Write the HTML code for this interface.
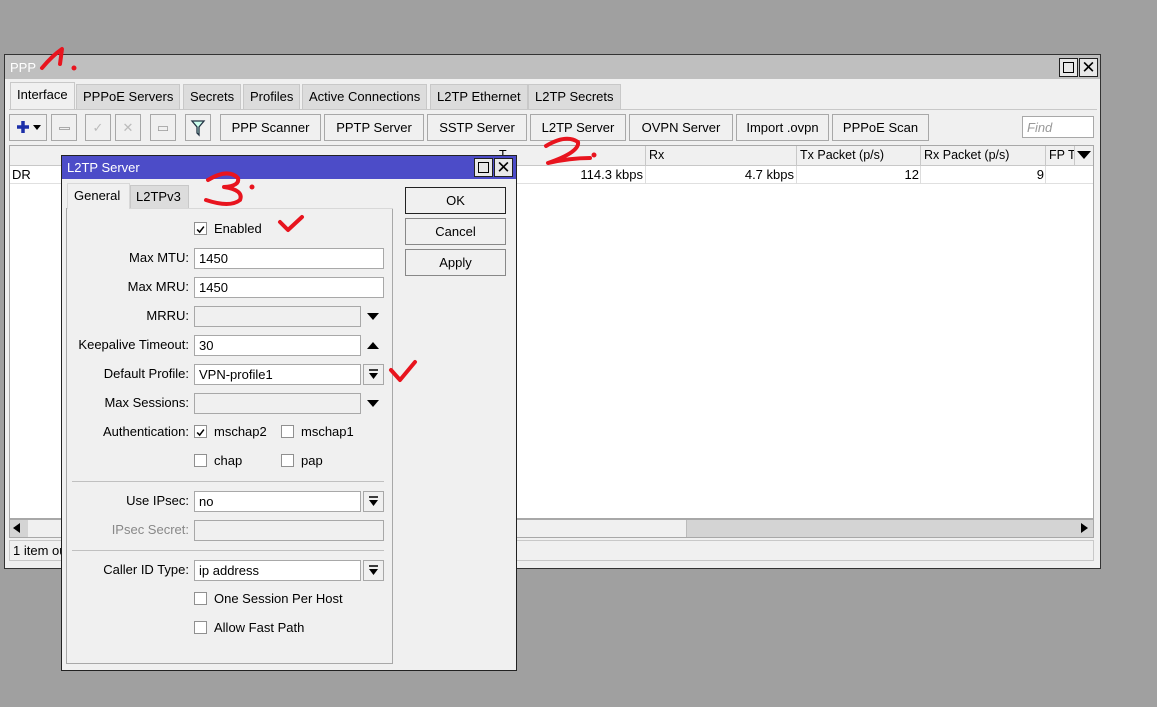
<!DOCTYPE html>
<html><head><meta charset="utf-8"><style>
*{box-sizing:border-box;margin:0;padding:0}
body{width:1157px;height:707px;background:#a0a0a0;position:relative;overflow:hidden;font-family:"Liberation Sans",sans-serif;font-size:13px;color:#000}
.a{position:absolute}
.btn{position:absolute;background:#f0f0f0;border:1px solid #a8a8a8;text-align:center;line-height:26px;font-size:13px}
.tab{position:absolute;top:84px;height:25px;background:#dcdcdc;border:1px solid #c8c8c8;border-bottom:none;line-height:24px;padding:0 6px;font-size:13px}
.hd{position:absolute;top:146px;height:20px;border-right:1px solid #c8c8c8;line-height:19px;padding-left:3px;font-size:12.5px;overflow:hidden;white-space:nowrap}
.lbl{position:absolute;right:968px;text-align:right;font-size:13px;white-space:nowrap}
.inp{position:absolute;left:194px;height:21px;background:#fff;border:1px solid #a8a8a8;line-height:19px;padding-left:4px;font-size:13px}
.dis{background:#f0f0f0}
.cb{position:absolute;width:13px;height:13px;border:1px solid #909090;background:#fff}
.dd{position:absolute;left:363px;width:21px;height:21px;border:1px solid #a8a8a8;background:#f0f0f0}
.ck{position:absolute;font-size:13px;white-space:nowrap}
.tri{position:absolute;left:367px;width:0;height:0;border-left:6px solid transparent;border-right:6px solid transparent}
</style></head><body>
<div class="a" style="left:4px;top:54px;width:1097px;height:515px;background:#f0f0f0;border:1px solid #333"></div>
<div class="a" style="left:5px;top:55px;width:1095px;height:24px;background:#bfbfbf"></div>
<div class="a" style="left:10px;top:60px;color:#fff;font-size:13px">PPP</div>
<div class="a" style="left:1059px;top:58px;width:19px;height:19px;border:1px solid #222;background:#e8e8e8"><div class="a" style="left:3px;top:3px;width:11px;height:11px;border:1.5px solid #000"></div></div>
<div class="a" style="left:1079px;top:58px;width:19px;height:19px;border:1px solid #222;background:#e8e8e8;text-align:center;line-height:17px;font-size:17px">✕</div>
<div class="tab" style="left:10px;top:82px;height:27px;background:#f0f0f0">Interface</div>
<div class="tab" style="left:76px">PPPoE Servers</div>
<div class="tab" style="left:183px">Secrets</div>
<div class="tab" style="left:243px">Profiles</div>
<div class="tab" style="left:302px">Active Connections</div>
<div class="tab" style="left:430px">L2TP Ethernet</div>
<div class="tab" style="left:528px">L2TP Secrets</div>
<div class="a" style="left:9px;top:109px;width:1088px;height:1px;background:#c8c8c8"></div>
<div class="btn" style="left:9px;top:114px;width:38px;height:27px"><svg width="34" height="25" style="position:absolute;left:1px;top:0"><path d="M6 12h12M12 6v12" stroke="#1c2fa8" stroke-width="3.5"/><path d="M22 10h8l-4 5z" fill="#000"/></svg></div>
<div class="btn" style="left:51px;top:114px;width:26px;height:27px"><div class="a" style="left:7px;top:12px;width:11px;height:3px;border:1px solid #aaa"></div></div>
<div class="btn" style="left:85px;top:114px;width:26px;height:27px;color:#bbb">✓</div>
<div class="btn" style="left:115px;top:114px;width:26px;height:27px;color:#bbb">✕</div>
<div class="btn" style="left:150px;top:114px;width:26px;height:27px;color:#999">▭</div>
<div class="btn" style="left:185px;top:114px;width:26px;height:27px"><svg width="16" height="18" style="margin-top:4px"><path d="M2 2h12l-5 6v8l-2-2V8z" fill="#cfe" stroke="#234" stroke-width="1.3"/></svg></div>
<div class="btn" style="left:220px;top:114px;width:101px;height:27px">PPP Scanner</div>
<div class="btn" style="left:324px;top:114px;width:100px;height:27px">PPTP Server</div>
<div class="btn" style="left:427px;top:114px;width:100px;height:27px">SSTP Server</div>
<div class="btn" style="left:530px;top:114px;width:96px;height:27px">L2TP Server</div>
<div class="btn" style="left:629px;top:114px;width:104px;height:27px">OVPN Server</div>
<div class="btn" style="left:736px;top:114px;width:93px;height:27px">Import .ovpn</div>
<div class="btn" style="left:832px;top:114px;width:97px;height:27px">PPPoE Scan</div>
<div class="a" style="left:1022px;top:116px;width:72px;height:22px;background:#fff;border:1px solid #a8a8a8;color:#999;font-style:italic;padding:3px 4px;font-size:13px">Find</div>
<div class="a" style="left:9px;top:145px;width:1085px;height:374px;background:#fff;border:1px solid #a8a8a8"></div>
<div class="a" style="left:10px;top:146px;width:1083px;height:20px;background:#f0f0f0;border-bottom:1px solid #c8c8c8"></div>
<div class="hd" style="left:496px;width:150px">T</div>
<div class="hd" style="left:646px;width:151px">Rx</div>
<div class="hd" style="left:797px;width:124px">Tx Packet (p/s)</div>
<div class="hd" style="left:921px;width:125px">Rx Packet (p/s)</div>
<div class="hd" style="left:1046px;width:29px">FP T</div>
<div class="a" style="left:1077px;top:151px;width:0;height:0;border-left:7px solid transparent;border-right:7px solid transparent;border-top:8px solid #000"></div>
<div class="a" style="left:10px;top:166px;width:1083px;height:18px;border-bottom:1px solid #e0e0e0"></div>
<div class="a" style="left:12px;top:167px;font-size:13px">DR</div>
<div class="a" style="left:516px;top:167px;width:127px;text-align:right">114.3 kbps</div>
<div class="a" style="left:646px;top:167px;width:148px;text-align:right">4.7 kbps</div>
<div class="a" style="left:797px;top:167px;width:122px;text-align:right">12</div>
<div class="a" style="left:921px;top:167px;width:123px;text-align:right">9</div>
<div class="a" style="left:645px;top:166px;width:1px;height:18px;background:#ddd"></div>
<div class="a" style="left:796px;top:166px;width:1px;height:18px;background:#ddd"></div>
<div class="a" style="left:920px;top:166px;width:1px;height:18px;background:#ddd"></div>
<div class="a" style="left:1045px;top:166px;width:1px;height:18px;background:#ddd"></div>
<div class="a" style="left:9px;top:519px;width:1085px;height:19px;background:#d4d4d4;border:1px solid #a8a8a8"></div>
<div class="a" style="left:28px;top:520px;width:659px;height:17px;background:#f0f0f0;border-right:1px solid #bbb"></div>
<div class="a" style="left:13px;top:523px;width:0;height:0;border-top:5px solid transparent;border-bottom:5px solid transparent;border-right:7px solid #000"></div>
<div class="a" style="left:1081px;top:523px;width:0;height:0;border-top:5px solid transparent;border-bottom:5px solid transparent;border-left:7px solid #000"></div>
<div class="a" style="left:9px;top:540px;width:1085px;height:21px;border:1px solid #c8c8c8"></div>
<div class="a" style="left:13px;top:543px">1 item out of 1</div>
<div class="a" style="left:61px;top:155px;width:456px;height:516px;background:#f0f0f0;border:1px solid #222"></div>
<div class="a" style="left:62px;top:156px;width:454px;height:23px;background:#4c4cc8"></div>
<div class="a" style="left:67px;top:160px;color:#fff;font-size:13px">L2TP Server</div>
<div class="a" style="left:474px;top:158px;width:19px;height:19px;border:1px solid #222;background:#e8e8e8"><div class="a" style="left:3px;top:3px;width:11px;height:11px;border:1.5px solid #000"></div></div>
<div class="a" style="left:494px;top:158px;width:19px;height:19px;border:1px solid #222;background:#e8e8e8;text-align:center;line-height:17px;font-size:17px">✕</div>
<div class="a" style="left:67px;top:183px;width:63px;height:26px;background:#f0f0f0;border:1px solid #d8d8d8;border-bottom:none;padding:4px 6px">General</div>
<div class="a" style="left:130px;top:185px;width:59px;height:24px;background:#dcdcdc;border:1px solid #c8c8c8;border-bottom:none;padding:3px 5px">L2TPv3</div>
<div class="a" style="left:66px;top:208px;width:327px;height:456px;border:1px solid #a8a8a8;border-top:none"></div>
<div class="a" style="left:130px;top:208px;width:263px;height:1px;background:#d8d8d8"></div>
<div class="btn" style="left:405px;top:187px;width:101px;height:27px;border-color:#222">OK</div>
<div class="btn" style="left:405px;top:218px;width:101px;height:27px;border-color:#888">Cancel</div>
<div class="btn" style="left:405px;top:249px;width:101px;height:27px;border-color:#888">Apply</div>
<svg width="0" height="0" style="position:absolute"><defs><symbol id="chk" viewBox="0 0 13 13"><path d="M2.5 6.5l3 3 5-6.5" fill="none" stroke="#000" stroke-width="1.8"/></symbol><symbol id="dda" viewBox="0 0 19 19"><path d="M5 5h9" stroke="#000" stroke-width="1.5"/><path d="M5 8h9l-4.5 6z" fill="#000"/></symbol></defs></svg>
<div class="cb" style="left:194px;top:222px"><svg width="11" height="11"><use href="#chk"/></svg></div>
<div class="ck" style="left:214px;top:221px">Enabled</div>
<div class="lbl" style="top:250px">Max MTU:</div>
<div class="inp" style="top:248px;width:190px">1450</div>
<div class="lbl" style="top:279px">Max MRU:</div>
<div class="inp" style="top:277px;width:190px">1450</div>
<div class="lbl" style="top:308px">MRRU:</div>
<div class="inp dis" style="top:306px;width:167px"></div>
<div class="tri" style="top:313px;border-top:7px solid #000"></div>
<div class="lbl" style="top:337px">Keepalive Timeout:</div>
<div class="inp" style="top:335px;width:167px">30</div>
<div class="tri" style="top:342px;border-bottom:7px solid #000"></div>
<div class="lbl" style="top:366px">Default Profile:</div>
<div class="inp" style="top:364px;width:167px">VPN-profile1</div>
<div class="dd" style="top:364px"><svg width="19" height="19"><use href="#dda"/></svg></div>
<div class="lbl" style="top:395px">Max Sessions:</div>
<div class="inp dis" style="top:393px;width:167px"></div>
<div class="tri" style="top:400px;border-top:7px solid #000"></div>
<div class="lbl" style="top:424px">Authentication:</div>
<div class="cb" style="left:194px;top:425px"><svg width="11" height="11"><use href="#chk"/></svg></div>
<div class="ck" style="left:214px;top:424px">mschap2</div>
<div class="cb" style="left:281px;top:425px"></div><div class="ck" style="left:301px;top:424px">mschap1</div>
<div class="cb" style="left:194px;top:454px"></div><div class="ck" style="left:214px;top:453px">chap</div>
<div class="cb" style="left:281px;top:454px"></div><div class="ck" style="left:301px;top:453px">pap</div>
<div class="a" style="left:72px;top:481px;width:312px;height:1px;background:#c0c0c0"></div>
<div class="lbl" style="top:493px">Use IPsec:</div>
<div class="inp" style="top:491px;width:167px">no</div>
<div class="dd" style="top:491px"><svg width="19" height="19"><use href="#dda"/></svg></div>
<div class="lbl" style="top:522px;color:#888">IPsec Secret:</div>
<div class="inp dis" style="top:520px;width:190px"></div>
<div class="a" style="left:72px;top:550px;width:312px;height:1px;background:#c0c0c0"></div>
<div class="lbl" style="top:562px">Caller ID Type:</div>
<div class="inp" style="top:560px;width:167px">ip address</div>
<div class="dd" style="top:560px"><svg width="19" height="19"><use href="#dda"/></svg></div>
<div class="cb" style="left:194px;top:592px"></div><div class="ck" style="left:214px;top:591px">One Session Per Host</div>
<div class="cb" style="left:194px;top:621px"></div><div class="ck" style="left:214px;top:620px">Allow Fast Path</div>
<svg class="a" style="left:0;top:0" width="1157" height="707"><g fill="none" stroke="#e8141e" stroke-width="4" stroke-linecap="round" stroke-linejoin="round">
<path d="M42 68 Q52 56 62 49 L60 64"/>
<path d="M208 180 Q228 168 238 178 Q240 186 224 187 Q244 190 240 200 Q230 208 206 200"/>
<path d="M546 146 Q566 134 578 142 Q580 152 548 163 Q570 158 590 158"/>
<path d="M280 222 L288 230 L302 217"/>
<path d="M391 370 L400 380 L415 362"/>
</g><g fill="#e8141e"><circle cx="74" cy="68" r="2.5"/><circle cx="252" cy="187" r="2.5"/><circle cx="594" cy="155" r="2.5"/></g></svg>
</body></html>
